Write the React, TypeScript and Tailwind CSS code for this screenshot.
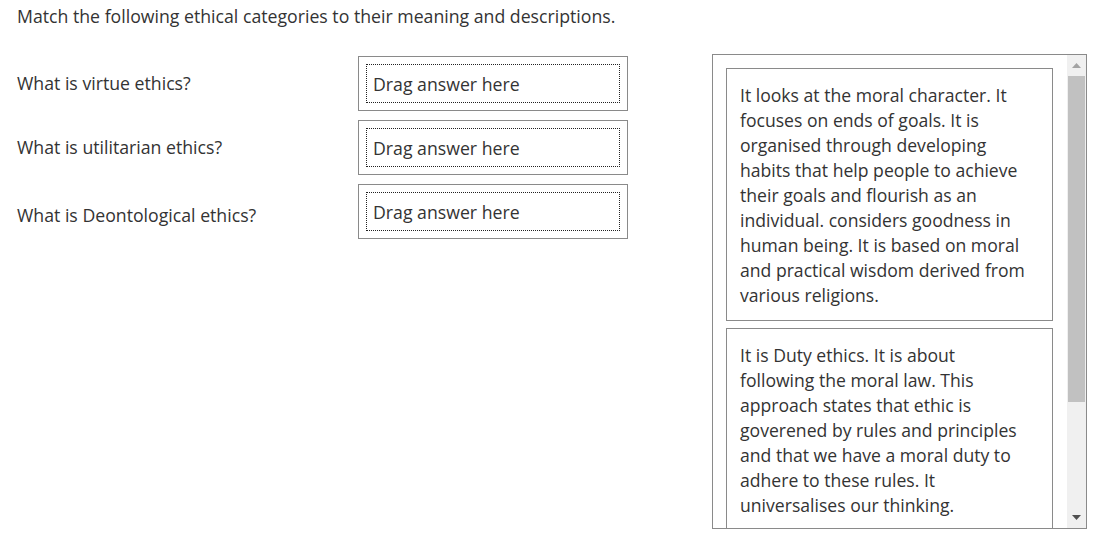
import React from "react";

const font = { fontFamily: '"Open Sans", "Noto Sans", sans-serif' };

const questions = [
  "What is virtue ethics?",
  "What is utilitarian ethics?",
  "What is Deontological ethics?",
];

const card1 = [
  "It looks at the moral character. It",
  "focuses on ends of goals. It is",
  "organised through developing",
  "habits that help people to achieve",
  "their goals and flourish as an",
  "individual. considers goodness in",
  "human being. It is based on moral",
  "and practical wisdom derived from",
  "various religions.",
];

const card2 = [
  "It is Duty ethics. It is about",
  "following the moral law. This",
  "approach states that ethic is",
  "goverened by rules and principles",
  "and that we have a moral duty to",
  "adhere to these rules. It",
  "universalises our thinking.",
];

function Card({ lines }: { lines: string[] }) {
  return (
    <div className="shrink-0 border border-[#8a8a8a] bg-white pl-[13px] pr-[4px] pt-[14px] pb-[12px]">
      {lines.map((l, i) => (
        <div key={i} className="whitespace-nowrap text-[17.6px] leading-[25px] text-[#333]">
          {l}
        </div>
      ))}
    </div>
  );
}

export default function App() {
  return (
    <div className="w-[1107px] h-[538px] bg-white text-[#333] overflow-hidden" style={font}>
      <div className="pl-[17px] pt-[4px] text-[17.7px] leading-[25px]">
        Match the following ethical categories to their meaning and descriptions.
      </div>
      <div className="flex pt-[25px]">
        <div className="flex flex-col gap-[9px] pt-[2px]">
          {questions.map((q, i) => (
            <div key={i} className="flex items-center h-[55px]">
              <div className={`w-[358px] pl-[17px] text-[17.7px] ${i === 2 ? "pt-[8px]" : ""}`}>{q}</div>
              <div className="w-[270px] h-[55px] border border-[#8a8a8a] p-[7px]">
                <div className="h-full border border-dotted border-[#222] flex items-center pl-[6px] text-[17.7px] pt-[1px]">
                  Drag answer here
                </div>
              </div>
            </div>
          ))}
        </div>
        <div className="ml-[84px] w-[375px] h-[475px] border border-[#8a8a8a] flex">
          <div className="flex-1 overflow-hidden pl-[13px] pr-[14px] pt-[13px] flex flex-col gap-[7px]">
            <Card lines={card1} />
            <Card lines={card2} />
          </div>
          <div className="w-[19px] bg-[#f0f0f0] flex flex-col items-center">
            <div className="h-[21px] flex items-center justify-center">
              <svg width="9" height="5" viewBox="0 0 9 5"><path d="M4.5 0 L9 5 L0 5 Z" fill="#a3a3a3" /></svg>
            </div>
            <div className="w-[17px] h-[326px] bg-[#c1c1c1]" />
            <div className="flex-1" />
            <div className="h-[21px] flex items-center justify-center">
              <svg width="9" height="5" viewBox="0 0 9 5"><path d="M0 0 L9 0 L4.5 5 Z" fill="#505050" /></svg>
            </div>
          </div>
        </div>
      </div>
    </div>
  );
}
